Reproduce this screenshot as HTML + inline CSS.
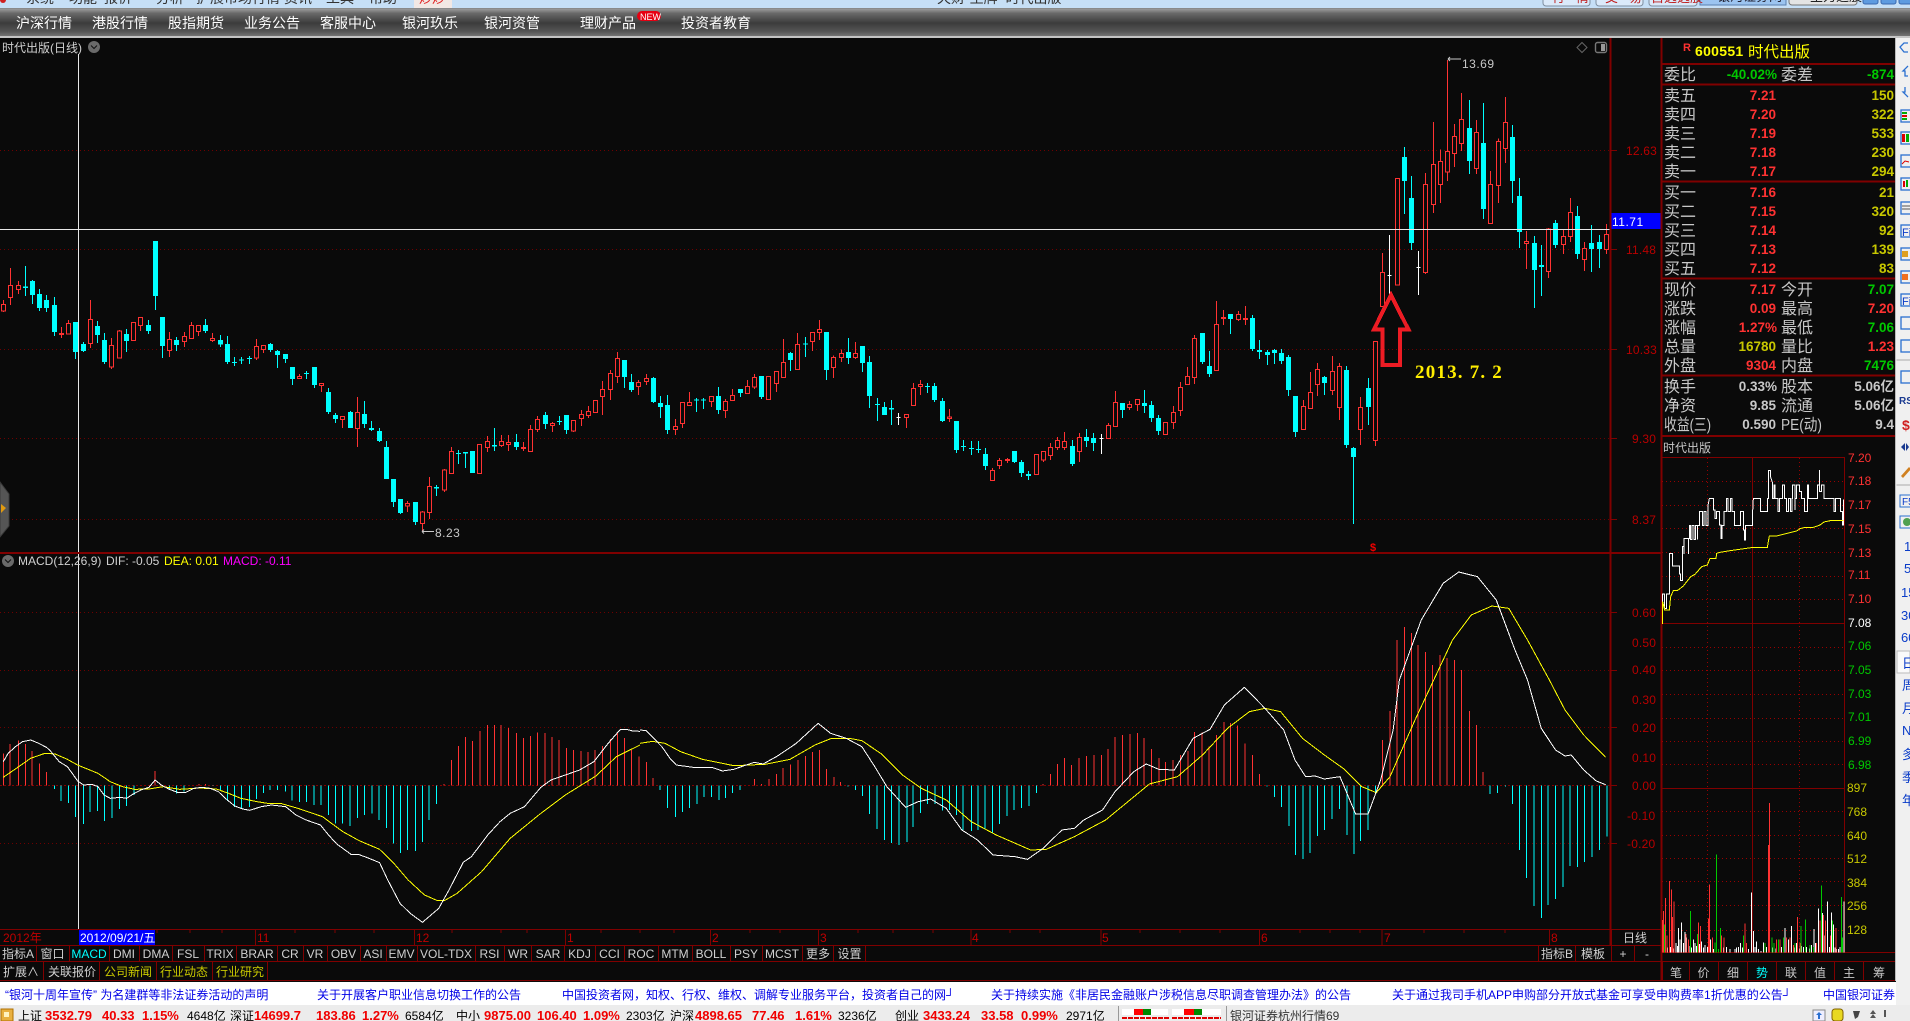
<!DOCTYPE html>
<html><head><meta charset="utf-8"><title>时代出版</title>
<style>
html,body{margin:0;padding:0;background:#0a0a0a;width:1910px;height:1021px;overflow:hidden}
svg{display:block;position:absolute;left:0;top:0}
text{font-family:"Liberation Sans","WenQuanYi Zen Hei","Noto Sans CJK SC",sans-serif;white-space:pre}
.rw{stroke:#ff3232;stroke-width:3;fill:none}
.rb{stroke:#ff3232;stroke-width:3;fill:#0a0a0a}
.cw{stroke:#0ff;stroke-width:3;fill:none}
.cb{stroke:#0ff;stroke-width:15;fill:none}
.ww{stroke:#fff;stroke-width:3;fill:none}
.ln{stroke:#800000;stroke-width:1;fill:none}
.ln2{stroke:#800000;stroke-width:2;fill:none}
.dot{stroke:#6e0000;stroke-width:1;stroke-dasharray:1 3;fill:none}
.ns{vector-effect:non-scaling-stroke}
.ax{font-size:12px;fill:#b80000;letter-spacing:.2px}
.nav{font-size:14px;fill:#fff}
.top{font-size:14px;fill:#333}
.tb{font-size:12px;fill:#d0d0d0}
.lb{font-size:16px;fill:#c8c8c8}
.n{font-size:13.5px;font-weight:bold;text-anchor:end}
.r{fill:#ff3232}.g{fill:#00c800}.y{fill:#c8c800}.w{fill:#c8c8c8}
.mr{font-size:12px;fill:#ff3232}.mg{font-size:12px;fill:#00c800}.mv{font-size:12px;fill:#c8c800}
.mq{font-size:12px;fill:#0000e6}
.st{font-size:12px;fill:#000}
.sr{font-size:13px;fill:#f00000;font-weight:bold}
.tbr{font-size:13px;fill:#0a3cc8}
</style></head><body>
<svg width="1910" height="1021" viewBox="0 0 1910 1021" xmlns="http://www.w3.org/2000/svg">
<defs><linearGradient id="nv" x1="0" y1="0" x2="0" y2="1"><stop offset="0" stop-color="#9a9a9a"/><stop offset=".15" stop-color="#6a6a6a"/><stop offset=".5" stop-color="#3c3c3c"/><stop offset=".8" stop-color="#555"/><stop offset="1" stop-color="#7a7a7a"/></linearGradient></defs>
<rect width="1910" height="1021" fill="#0a0a0a"/>

<!-- top menu strip -->
<rect width="1910" height="9" fill="#c6dff6"/>
<rect x="414" y="0" width="38" height="8" fill="#f2e8e4"/>
<circle cx="3" cy="0" r="3" fill="#d02020"/>
<g class="top"><text class="top" x="26" y="3">系统</text><text class="top" x="69" y="3">功能</text><text class="top" x="104" y="3">报价</text><text class="top" x="156" y="3">分析</text><text class="top" x="196" y="3">扩展市场行情</text><text class="top" x="284" y="3">资讯</text><text class="top" x="326" y="3">工具</text><text class="top" x="369" y="3">帮助</text><text x="419" y="3" style="font-size:13px;fill:#e02020">炒炒</text><text class="top" x="937" y="3">天财·王牌  时代出版</text></g>
<g fill="#dbeafa" stroke="#7f8fa0"><rect x="1543" y="-6" width="47" height="12" rx="3"/><rect x="1596" y="-6" width="47" height="12" rx="3"/><rect x="1649" y="-6" width="48" height="12" rx="3"/></g>
<rect x="1700" y="-4" width="86" height="9" fill="#9cc4f0" stroke="#5a7fb0"/>
<rect x="1789" y="-4" width="68" height="9" fill="#e4e4e4" stroke="#777" rx="3"/>
<g fill="#5e9be0" stroke="#3a6ab0"><rect x="1863" y="-4" width="15" height="8" rx="2"/><rect x="1881" y="-4" width="15" height="8" rx="2"/><rect x="1899" y="-4" width="15" height="8" rx="2"/></g>
<text x="1552" y="2" style="font-size:13px;fill:#c02020">行   情</text><text x="1605" y="2" style="font-size:13px;fill:#c02020">交   易</text><text x="1651" y="2" style="font-size:13px;fill:#c02020">自选选股</text><text x="1717" y="1" style="font-size:13px;fill:#223">银河证券网</text><text x="1810" y="1" style="font-size:13px;fill:#222">主力选股</text>

<!-- nav -->
<rect x="0" y="9" width="1910" height="28" fill="url(#nv)"/>
<rect x="0" y="8" width="1910" height="1" fill="#8a8a8a"/><rect x="0" y="36" width="1910" height="2" fill="#c4c4c4"/>
<g class="nav"><text class="nav" x="16" y="28">沪深行情</text><text class="nav" x="92" y="28">港股行情</text><text class="nav" x="168" y="28">股指期货</text><text class="nav" x="244" y="28">业务公告</text><text class="nav" x="320" y="28">客服中心</text><text class="nav" x="402" y="28">银河玖乐</text><text class="nav" x="484" y="28">银河资管</text><text class="nav" x="580" y="28">理财产品</text><text class="nav" x="681" y="28">投资者教育</text></g>
<rect x="637" y="11" width="24" height="10" rx="5" fill="#e60012"/><text x="640" y="20" style="font-size:9px;fill:#fff">NEW</text>

<!-- titles -->
<text x="2" y="52" style="font-size:12px;fill:#d0d0d0">时代出版(日线)</text>
<circle cx="94" cy="47" r="6" fill="#6a6a6a"/><path d="M91 45.5l3 3 3-3" stroke="#111" fill="none"/>
<path d="M1582 42.5l5 5-5 5-5-5z" stroke="#666" fill="none"/>
<rect x="1595.5" y="42.5" width="11" height="10" rx="2" stroke="#777" fill="none" stroke-width="1.4"/><rect x="1601" y="44" width="4" height="7" fill="#999"/>

<!-- main dotted -->
<path class="dot" d="M0 150.5H1610M0 249.5H1610M0 349.5H1610M0 438.5H1610M0 519.5H1610"/>
<path class="ln" d="M1611 150.5h6M1611 249.5h6M1611 349.5h6M1611 438.5h6M1611 519.5h6"/>

<!-- candles A -->
<g transform="translate(0 230) scale(.33333)" shape-rendering="crispEdges">
<path class="rw" d="M10 210V246M31 114V225M55 153V192M184 291V324M205 270V312M271 210V354M334 324V417M358 300V384M400 276V333M421 262V303M508 306V381M553 306V351M574 276V327M595 285V318M637 309V336M769 327V390M790 345V369M898 432V446M964 459V486M1027 559V594M1072 501V651M1222 813V846M1267 843V903M1288 741V867M1333 717V786M1354 651V731M1438 642V732"/>
<path class="rb" d="M4 223h12V243h-12zM25 166h12V203h-12zM49 166h12V179h-12zM178 310h12V314h-12zM199 280h12V312h-12zM265 268h12V341h-12zM328 346h12V411h-12zM352 303h12V384h-12zM394 277h12V332h-12zM415 262h12V287h-12zM502 328h12V362h-12zM547 319h12V334h-12zM568 286h12V326h-12zM589 286h12V304h-12zM631 325h12V332h-12zM763 349h12V384h-12zM784 346h12V359h-12zM892 439h12V446h-12zM958 460h12V467h-12zM1021 559h12V569h-12zM1066 547h12V596h-12zM1216 820h12V828h-12zM1261 846h12V880h-12zM1282 769h12V848h-12zM1327 720h12V780h-12zM1348 664h12V730h-12zM1432 643h12V731h-12z"/>
<path class="cw" d="M76 108V198M97 150V222M118 177V243M139 195V246M163 201V318M226 276V387M250 336V366M292 273V339M313 309V402M379 297V366M445 270V312M466 33V240M487 261V384M529 321V363M616 267V309M661 315V351M682 318V402M703 381V408M724 381V402M748 378V402M811 339V366M832 360V414M856 372V399M877 411V465M919 423V447M943 411V474M985 474V552M1006 549V579M1051 543V594M1093 513V594M1114 573V603M1138 594V636M1159 633V747M1180 747V831M1201 807V852M1246 816V885M1309 765V798M1375 660V702M1396 666V714M1417 663V729"/>
<path class="cb" d="M76 169V174M97 153V195M118 192V234M139 210V234M163 225V306M226 276V366M250 342V363M292 288V315M313 330V396M379 312V333M445 285V303M466 33V198M487 261V348M529 330V345M616 285V303M661 330V343M682 342V396M703 396V399M724 388V392M748 384V387M811 342V360M832 363V375M856 372V387M877 411V447M919 429V432M943 411V465M985 486V546M1006 555V567M1051 546V594M1093 552V582M1114 594V600M1138 603V633M1159 651V747M1180 747V816M1201 807V849M1246 816V876M1309 771V776M1375 669V672M1396 666V670M1417 663V729"/>
</g>
<!-- candles B -->
<g transform="translate(480 300) scale(.33333)" shape-rendering="crispEdges">
<path class="rw" d="M22 408V456M64 405V441M85 405V453M130 426V453M151 375V456M172 348V396M217 366V396M280 360V396M304 330V378M325 318V354M346 300V339M367 243V345M391 210V300M412 156V249M475 240V285M499 222V255M586 357V405M607 307V384M628 276V318M694 289V321M736 297V354M757 267V303M802 240V282M823 222V267M865 229V300M889 214V276M910 117V234M952 99V210M997 97V153M1018 60V120M1060 166V234M1084 148V186M1126 126V177M1279 343V384M1300 249V318M1321 240V285M1408 327V366"/>
<path class="rb" d="M16 424h12V443h-12zM58 424h12V437h-12zM79 427h12V433h-12zM124 442h12V445h-12zM145 388h12V455h-12zM166 358h12V389h-12zM211 370h12V376h-12zM274 361h12V393h-12zM298 343h12V356h-12zM319 334h12V347h-12zM340 301h12V338h-12zM361 268h12V290h-12zM385 220h12V269h-12zM406 175h12V230h-12zM469 247h12V260h-12zM493 235h12V245h-12zM580 379h12V389h-12zM601 307h12V371h-12zM622 307h12V317h-12zM688 289h12V305h-12zM730 304h12V332h-12zM751 286h12V302h-12zM796 259h12V281h-12zM817 232h12V261h-12zM859 229h12V299h-12zM883 214h12V250h-12zM904 187h12V233h-12zM946 133h12V209h-12zM991 97h12V125h-12zM1012 88h12V98h-12zM1054 172h12V203h-12zM1078 160h12V173h-12zM1120 160h12V173h-12zM1273 343h12V353h-12zM1294 265h12V317h-12zM1315 253h12V260h-12zM1402 351h12V356h-12z"/>
<path class="cw" d="M43 384V453M109 402V450M196 336V387M238 348V375M259 345V402M433 180V264M454 222V276M520 231V309M541 288V354M562 285V402M649 294V336M670 294V327M715 261V342M781 267V291M844 228V297M931 156V213M976 111V171M1039 96V240M1105 114V192M1147 138V216M1168 168V324M1192 294V363M1213 306V345M1234 300V375M1342 249V279M1363 249V306M1387 294V366M1429 363V459"/>
<path class="cb" d="M43 435V440M109 426V441M196 345V372M238 363V366M259 345V390M433 180V231M454 246V270M520 234V306M541 309V321M562 315V390M649 299V302M670 299V302M715 288V330M781 267V279M844 228V291M931 159V180M976 131V134M1039 96V210M1105 156V174M1147 138V189M1168 186V288M1192 312V315M1213 321V345M1234 324V329M1342 258V261M1363 258V300M1387 303V363M1429 363V450"/>
<path class="ww" d="M1255 339V375M1249 352.500h12"/>
</g>
<!-- candles C -->
<g transform="translate(960 290) scale(.33333)" shape-rendering="crispEdges">
<path class="rw" d="M97 534V572M118 504V537M142 504V519M229 492V555M250 483V516M271 459V510M292 441V480M313 426V480M358 429V516M445 399V447M466 303V411M508 333V360M532 328V363M616 397V435M640 348V417M661 276V378M682 231V285M703 135V282M769 33V243M790 60V105M835 63V93M856 48V105M1030 330V420M1051 246V357M1072 219V318M1117 198V315M1138 219V390M1201 321V465M1246 153V468"/>
<path class="rb" d="M91 541h12V572h-12zM112 511h12V527h-12zM136 508h12V512h-12zM223 493h12V554h-12zM244 484h12V510h-12zM265 472h12V497h-12zM286 451h12V473h-12zM307 454h12V473h-12zM352 442h12V485h-12zM439 406h12V446h-12zM460 337h12V410h-12zM502 343h12V353h-12zM526 328h12V344h-12zM610 397h12V434h-12zM634 367h12V398h-12zM655 292h12V362h-12zM676 259h12V284h-12zM697 145h12V262h-12zM763 103h12V242h-12zM784 82h12V86h-12zM829 73h12V89h-12zM850 85h12V89h-12zM1024 349h12V419h-12zM1045 307h12V356h-12zM1066 238h12V284h-12zM1111 244h12V302h-12zM1132 229h12V353h-12zM1195 352h12V419h-12zM1240 154h12V452h-12z"/>
<path class="cw" d="M10 450V483M34 453V495M55 453V489M76 474V540M163 483V519M184 510V561M205 543V570M337 450V528M379 417V471M400 429V483M487 339V384M553 300V369M574 333V396M595 375V435M727 129V222M748 183V261M811 72V132M877 75V183M898 150V207M922 180V225M943 177V222M964 177V222M985 195V318M1006 318V441M1093 258V315M1159 228V474M1180 471V702M1225 264V405"/>
<path class="cb" d="M10 468V471M34 474V477M55 477V480M76 492V528M163 483V516M184 516V549M205 552V558M337 468V522M379 441V453M400 444V459M487 339V360M553 339V348M574 345V384M595 384V423M727 129V216M748 228V252M811 72V87M877 84V177M898 180V186M922 186V195M943 180V189M964 189V213M985 201V300M1006 318V426M1093 261V279M1159 240V465M1180 474V501M1225 294V351"/>
<path class="ww" d="M424 432V492M418 445.500h12"/>
</g>
<!-- candles D -->
<g transform="translate(1300 40) scale(.33333)" shape-rendering="crispEdges">
<path class="rw" d="M247 639V800M292 415V735M376 399V702M400 246V519M421 328V489M442 60V423M463 252V381M484 159V333M529 240V402M571 393V552M595 295V489M616 171V369M679 573V687M745 564V714M790 570V642M811 474V606M853 606V693M919 552V642"/>
<path class="rb" d="M241 697h12V800h-12zM286 415h12V735h-12zM370 433h12V698h-12zM394 373h12V494h-12zM415 364h12V434h-12zM436 334h12V396h-12zM457 289h12V341h-12zM478 238h12V311h-12zM523 277h12V386h-12zM565 433h12V551h-12zM589 304h12V437h-12zM610 247h12V326h-12zM673 604h12V610h-12zM739 567h12V695h-12zM784 589h12V613h-12zM805 517h12V590h-12zM847 625h12V659h-12zM913 583h12V628h-12z"/>
<path class="cw" d="M313 321V522M334 408V630M508 180V402M550 189V537M637 255V489M658 414V624M703 588V804M724 615V768M766 540V624M832 498V657M874 555V696M898 585V684"/>
<path class="cb" d="M313 351V423M334 474V609M508 264V363M550 309V507M637 291V423M658 468V576M703 609V690M724 675V681M766 549V615M832 528V642M874 609V627M898 606V627"/>
<path class="ww" d="M268 585V765M262 706.500h12M355 633V765M349 682.500h12"/>
<path d="M273 765L222 868H248V975H300V868H325Z" fill="none" stroke="#ed1c24" stroke-width="12" stroke-linejoin="miter"/>
</g>
<text x="1415" y="378" style="font-family:'Liberation Serif',serif;font-size:19px;font-weight:bold;fill:#ffee00;letter-spacing:1.2px">2013. 7. 2</text>
<!-- high low marks -->
<path d="M1448 59l2-2M1448 59l2 2M1448 59h13" stroke="#c8c8c8" fill="none"/>
<text x="1462" y="68" style="font-size:12px;fill:#c8c8c8;letter-spacing:.5px">13.69</text>
<path d="M422 531.500l2-2M422 531.500l2 2M422 531.500h12" stroke="#c8c8c8" fill="none"/>
<text x="435" y="537" style="font-size:12px;fill:#c8c8c8;letter-spacing:.5px">8.23</text>
<text x="1370" y="551" style="font-size:11px;font-weight:bold;fill:#f00000">$</text>

<!-- crosshair -->
<rect x="0" y="229" width="1610" height="1" fill="#e8e8e8"/>
<rect x="78" y="54" width="1" height="875" fill="#e8e8e8"/>

<!-- left handle -->
<path d="M0 482L9 494V526L0 537Z" fill="#555" stroke="#3a3a3a"/><path d="M1 504L6 508L1 513Z" fill="#e09a10"/>

<!-- axis -->
<text class="ax" x="1626" y="155">12.63</text><text class="ax" x="1626" y="254">11.48</text><text class="ax" x="1626" y="354">10.33</text><text class="ax" x="1632" y="443">9.30</text><text class="ax" x="1632" y="524">8.37</text>
<rect x="1611" y="213" width="50" height="16" fill="#0000ff"/><text x="1612" y="226" style="font-size:12px;fill:#fff;letter-spacing:.5px">11.71</text>

<!-- MACD -->
<path class="ln2" d="M0 553H1662"/>
<circle cx="8" cy="561" r="6" fill="#6a6a6a"/><path d="M5 559.500l3 3 3-3" stroke="#111" fill="none"/>
<text x="18" y="565" style="font-size:12px;fill:#d0d0d0">MACD(12,26,9)</text><text x="106" y="565" style="font-size:12px;fill:#d0d0d0">DIF: -0.05</text><text x="164" y="565" style="font-size:12px;fill:#ffff00">DEA: 0.01</text><text x="223" y="565" style="font-size:12px;fill:#ff00ff">MACD: -0.11</text>
<path class="dot" d="M0 612.500H1610M0 670.500H1610M0 727.500H1610M0 843.500H1610"/>
<path class="ln" d="M0 785.500H1610" stroke-dasharray="2 2"/>
<path class="ln" d="M1611 612.500h6M1611 670.500h6M1611 727.500h6M1611 785.500h6M1611 843.500h6"/>
<g class="ax"><text class="ax" x="1632" y="617">0.60</text><text class="ax" x="1632" y="647">0.50</text><text class="ax" x="1632" y="674">0.40</text><text class="ax" x="1632" y="704">0.30</text><text class="ax" x="1632" y="732">0.20</text><text class="ax" x="1632" y="762">0.10</text><text class="ax" x="1632" y="790">0.00</text><text class="ax" x="1627" y="820">-0.10</text><text class="ax" x="1627" y="848">-0.20</text></g>

<g transform="translate(0 700) scale(.40816 .33333)" shape-rendering="crispEdges">
<path class="ns" stroke="#ff3232" fill="none" d="M8 256V160M25 256V132M45 256V122M62 256V132M79 256V153M97 256V190M114 256V216M380 256V213M487 256V252M503 256V252M1088 256V252M1106 256V180M1123 256V138M1140 256V111M1158 256V123M1176 256V93M1194 256V75M1211 256V75M1228 256V75M1246 256V84M1265 256V99M1282 256V114M1300 256V108M1317 256V97M1335 256V99M1353 256V111M1370 256V120M1388 256V144M1405 256V150M1423 256V153M1440 256V156M1458 256V150M1476 256V138M1496 256V117M1513 256V96M1530 256V114M1547 256V150M1565 256V170"/>
<path class="ns" stroke="#0ff" fill="none" d="M133 256V267M150 256V303M168 256V309M185 256V351M204 256V372M221 256V336M239 256V333M256 256V363M274 256V354M293 256V327M310 256V318M328 256V285M415 256V268M433 256V280M451 256V275M522 256V258M540 256V270M557 256V303M574 256V321M592 256V324M611 256V321M628 256V297M645 256V279M662 256V270M680 256V270M699 256V274M716 256V301M734 256V306M751 256V306M769 256V315M787 256V315M805 256V345M822 256V370M839 256V370M858 256V378M876 256V354M893 256V345M911 256V340M929 256V360M947 256V384M964 256V430M981 256V459M998 256V450M1018 256V453M1035 256V426M1051 256V360M1069 256V312"/>
<polyline class="ns" fill="none" stroke="#ffff00" points="8,232 40,205 75,175 110,160 135,162 165,178 190,195 240,220 270,245 300,260 330,268 365,267 400,260 440,268 490,264 530,267 560,280 590,295 630,305 660,311 690,311 730,325 790,350 840,395 880,422 930,448 965,490 1000,540 1040,585 1070,601 1090,601 1120,580 1180,515 1250,415 1320,345 1385,285 1460,228 1510,170 1568,135"/>
<polyline class="ns" fill="none" stroke="#fff" points="8,185 20,160 38,140 55,125 75,120 95,130 115,143 125,155 145,185 165,200 180,225 190,243 205,255 225,253 240,260 255,285 270,295 295,292 310,295 325,283 345,270 365,262 380,240 395,255 415,268 435,277 455,277 475,265 495,262 515,265 535,275 555,298 575,318 595,327 612,331 640,320 665,315 700,320 725,345 750,360 785,375 805,405 825,432 860,463 880,464 900,473 930,488 950,540 980,610 1005,640 1035,667 1075,625 1100,570 1135,487 1155,470 1195,405 1225,365 1250,340 1285,320 1325,262 1350,240 1385,225 1420,210 1455,185 1490,130 1520,88 1535,88 1550,93 1568,94"/>
</g>
<g transform="translate(640 680) scale(.625 .33333)" shape-rendering="crispEdges">
<path class="ns" stroke="#ff3232" fill="none" d="M10 316V246M21 316V294M183 316V297M194 316V312M206 316V297M218 316V282M229 316V264M241 316V254M253 316V240M265 316V228M276 316V216M287 316V210M298 316V267M310 316V291M321 316V306M645 316V312M657 316V282M668 316V252M679 316V234M690 316V255M702 316V234M714 316V228M726 316V225M738 316V225M749 316V207M760 316V171M772 316V165M784 316V162M796 316V159M806 316V174M818 316V207M830 316V234M841 316V246M853 316V240M865 316V225M877 316V213M887 316V156M899 316V158M910 316V200M922 316V165M934 316V126M945 316V129M956 316V136M968 316V190M980 316V225M991 316V282M1188 316V180M1200 316V93M1211 316V-120M1223 316V-159M1234 316V-141M1245 316V-105M1257 316V-84M1268 316V-45M1280 316V-75M1291 316V-66M1303 316V-60M1314 316V-30M1327 316V93M1338 316V135M1349 316V276"/>
<path class="ns" stroke="#0ff" fill="none" d="M32 316V330M44 316V384M57 316V411M68 316V396M79 316V384M91 316V372M102 316V351M114 316V351M126 316V360M137 316V354M148 316V339M160 316V330M333 316V319M345 316V330M356 316V348M367 316V402M379 316V447M391 316V480M402 316V489M414 316V495M427 316V486M437 316V441M449 316V399M460 316V372M472 316V372M484 316V391M495 316V390M506 316V405M517 316V450M530 316V453M541 316V450M552 316V448M564 316V459M575 316V432M587 316V408M598 316V390M610 316V384M622 316V378M634 316V339M1003 316V319M1015 316V351M1026 316V381M1038 316V438M1049 316V525M1061 316V537M1072 316V519M1084 316V468M1095 316V450M1107 316V417M1119 316V387M1131 316V465M1142 316V522M1153 316V483M1165 316V450M1177 316V340M1360 316V342M1372 316V339M1385 316V319M1396 316V372M1407 316V510M1418 316V594M1430 316V678M1442 316V714M1453 316V675M1465 316V657M1477 316V621M1488 316V558M1500 316V561M1511 316V546M1523 316V531M1535 316V510M1547 316V470"/>
<polyline class="ns" fill="none" stroke="#ffff00" points="0,190 20,184 40,190 65,215 100,238 150,257 200,253 240,238 280,195 305,176 335,175 355,182 385,220 420,285 450,325 490,360 530,425 570,465 625,510 650,508 695,470 745,420 815,312 860,290 900,225 940,145 975,95 1000,85 1025,95 1060,175 1095,225 1125,265 1155,320 1178,338 1200,290 1240,120 1270,0 1300,-120 1330,-195 1363,-222 1390,-215 1420,-120 1455,0 1480,90 1510,165 1545,232"/>
<polyline class="ns" fill="none" stroke="#fff" points="0,150 10,152 22,175 35,200 48,235 58,255 85,262 115,262 132,273 150,268 170,255 183,247 197,252 220,228 250,190 285,130 305,160 330,175 355,200 375,258 395,320 425,382 445,365 465,357 490,385 515,450 540,480 565,525 600,530 620,538 645,505 675,450 695,445 710,420 740,390 760,335 790,275 810,252 830,268 855,270 885,175 912,148 935,75 967,22 1000,85 1030,150 1048,240 1065,290 1080,288 1095,297 1120,290 1145,402 1165,402 1185,300 1205,150 1215,0 1250,-180 1285,-290 1310,-324 1340,-310 1370,-240 1400,-90 1420,0 1442,145 1465,210 1480,228 1490,225 1510,270 1530,303 1545,314"/>
</g>

<!-- time axis -->
<path class="ln" d="M0 929.500H1662M0 945.500H1662M0 961.500H1896M0 980.500H1896"/>
<path class="ln" d="M255.500 930V945M414.500 930V945M565.500 930V945M710.500 930V945M818.500 930V945M971 930V945M1101 930V945M1259.500 930V945M1382 930V945M1549.500 930V945M157 930v3M190 930v3M222 930v3M295 930v3M335 930v3M374 930v3M452 930v3M501 930v3M527 930v3M601 930v3M640 930v3M674 930v3M750 930v3M780 930v3M858 930v3M893 930v3M933 930v3M1010 930v3M1040 930v3M1140 930v3M1180 930v3M1220 930v3M1300 930v3M1330 930v3M1360 930v3M1424 930v3M1464 930v3M1505 930v3"/>
<rect x="79" y="930" width="76" height="15" fill="#0000ff"/><text x="80" y="942" style="font-size:12px;fill:#fff">2012/09/21/五</text>
<text x="3" y="942" style="font-size:12px;fill:#c00000">2012年</text>
<g style="font-size:12px;fill:#c00000"><text x="257" y="942">11</text><text x="416" y="942">12</text><text x="567" y="942">1</text><text x="712" y="942">2</text><text x="820" y="942">3</text><text x="972" y="942">4</text><text x="1102" y="942">5</text><text x="1261" y="942">6</text><text x="1384" y="942">7</text><text x="1551" y="942">8</text></g>

<!-- indicator tabs -->
<path class="ln" d="M36.500 946V961M69.500 946V961M109.500 946V961M139.500 946V961M172.500 946V961M204.500 946V961M236.500 946V961M277.500 946V961M303.500 946V961M327.500 946V961M360.500 946V961M386.500 946V961M417.500 946V961M475.500 946V961M504.500 946V961M531.500 946V961M564.500 946V961M595.500 946V961M624.500 946V961M658.500 946V961M692.500 946V961M730.500 946V961M762.500 946V961M802.500 946V961M833.500 946V961M865.500 946V961M1538.500 946V961M1575.500 946V961M1611.500 930V961M1634.500 946V961"/>
<g class="tb" text-anchor="middle"><text class="tb" x="18" y="958">指标A</text><text class="tb" x="52.500" y="958">窗口</text><text x="89" y="958" style="font-size:12px;fill:#0ff">MACD</text><text class="tb" x="124" y="958">DMI</text><text class="tb" x="156" y="958">DMA</text><text class="tb" x="188" y="958">FSL</text><text class="tb" x="220" y="958">TRIX</text><text class="tb" x="257" y="958">BRAR</text><text class="tb" x="290" y="958">CR</text><text class="tb" x="315" y="958">VR</text><text class="tb" x="343.500" y="958">OBV</text><text class="tb" x="373" y="958">ASI</text><text class="tb" x="401.500" y="958">EMV</text><text class="tb" x="446" y="958">VOL-TDX</text><text class="tb" x="489.500" y="958">RSI</text><text class="tb" x="518" y="958">WR</text><text class="tb" x="548" y="958">SAR</text><text class="tb" x="579.500" y="958">KDJ</text><text class="tb" x="609.500" y="958">CCI</text><text class="tb" x="641" y="958">ROC</text><text class="tb" x="675" y="958">MTM</text><text class="tb" x="711" y="958">BOLL</text><text class="tb" x="746" y="958">PSY</text><text class="tb" x="782" y="958">MCST</text><text class="tb" x="818" y="958">更多</text><text class="tb" x="849.500" y="958">设置</text>
<text class="tb" x="1557" y="958">指标B</text><text class="tb" x="1593" y="958">模板</text><text class="tb" x="1623" y="958">+</text><text class="tb" x="1647" y="958">-</text></g>
<text x="1623" y="942" style="font-size:12px;fill:#d0d0d0">日线</text>
<path class="ln" d="M43.500 962V980M99.500 962V980M156.500 962V980M212.500 962V980M267.500 962V980"/>
<text class="tb" x="3" y="976">扩展∧</text><text class="tb" x="48" y="976">关联报价</text>
<g style="font-size:12px;fill:#c8c800"><text x="104" y="976">公司新闻</text><text x="160" y="976">行业动态</text><text x="216" y="976">行业研究</text></g>
<g class="lb" text-anchor="middle"><text class="lb" style="font-size:12px" x="1676" y="977">笔</text><text class="lb" style="font-size:12px" x="1703.500" y="977">价</text><text class="lb" style="font-size:12px" x="1733" y="977">细</text><text style="font-size:12px;fill:#0ff" x="1762" y="977">势</text><text class="lb" style="font-size:12px" x="1791" y="977">联</text><text class="lb" style="font-size:12px" x="1820" y="977">值</text><text class="lb" style="font-size:12px" x="1849" y="977">主</text><text class="lb" style="font-size:12px" x="1879" y="977">筹</text></g>
<path class="ln" d="M1662.500 962V981M1689.500 962V981M1718.500 962V981M1747.500 962V981M1776.500 962V981M1805.500 962V981M1834.500 962V981M1863.500 962V981"/>

<!-- right panel frame -->
<path class="ln2" d="M1610.500 38V946M1661.500 38V981"/>
<path class="ln2" d="M1662 64H1896M1662 84.500H1896M1662 181.500H1896M1662 278.500H1896M1662 375.500H1896M1662 436H1896"/>

<text x="1683" y="51" style="font-size:11px;font-weight:bold;fill:#ff3232">R</text>
<text x="1695" y="56" style="font-size:14px;font-weight:bold;fill:#ff0;letter-spacing:.3px">600551</text>
<text x="1748" y="57" style="font-size:15.500px;fill:#ff0">时代出版</text>

<text class="lb" x="1664" y="80">委比</text><text class="lb" x="1781" y="80">委差</text><text class="n g" x="1777" y="79">-40.02%</text><text class="n g" x="1894" y="79">-874</text>
<g class="lb"><text class="lb" x="1664" y="101">卖五</text><text class="lb" x="1664" y="120">卖四</text><text class="lb" x="1664" y="139">卖三</text><text class="lb" x="1664" y="158">卖二</text><text class="lb" x="1664" y="177">卖一</text><text class="lb" x="1664" y="198">买一</text><text class="lb" x="1664" y="217">买二</text><text class="lb" x="1664" y="236">买三</text><text class="lb" x="1664" y="255">买四</text><text class="lb" x="1664" y="274">买五</text><text class="lb" x="1664" y="295">现价</text><text class="lb" x="1664" y="314">涨跌</text><text class="lb" x="1664" y="333">涨幅</text><text class="lb" x="1664" y="352">总量</text><text class="lb" x="1664" y="371">外盘</text><text class="lb" x="1664" y="392">换手</text><text class="lb" x="1664" y="411">净资</text><text class="lb" x="1664" y="430" textLength="47" lengthAdjust="spacingAndGlyphs">收益(三)</text>
<text class="lb" x="1781" y="295">今开</text><text class="lb" x="1781" y="314">最高</text><text class="lb" x="1781" y="333">最低</text><text class="lb" x="1781" y="352">量比</text><text class="lb" x="1781" y="371">内盘</text><text class="lb" x="1781" y="392">股本</text><text class="lb" x="1781" y="411">流通</text><text class="lb" x="1781" y="430" textLength="41" lengthAdjust="spacingAndGlyphs">PE(动)</text></g>
<text class="n r" x="1776" y="100">7.21</text><text class="n r" x="1776" y="119">7.20</text><text class="n r" x="1776" y="138">7.19</text><text class="n r" x="1776" y="157">7.18</text><text class="n r" x="1776" y="176">7.17</text><text class="n r" x="1776" y="197">7.16</text><text class="n r" x="1776" y="216">7.15</text><text class="n r" x="1776" y="235">7.14</text><text class="n r" x="1776" y="254">7.13</text><text class="n r" x="1776" y="273">7.12</text>
<text class="n y" x="1894" y="100">150</text><text class="n y" x="1894" y="119">322</text><text class="n y" x="1894" y="138">533</text><text class="n y" x="1894" y="157">230</text><text class="n y" x="1894" y="176">294</text><text class="n y" x="1894" y="197">21</text><text class="n y" x="1894" y="216">320</text><text class="n y" x="1894" y="235">92</text><text class="n y" x="1894" y="254">139</text><text class="n y" x="1894" y="273">83</text>
<text class="n r" x="1776" y="294">7.17</text><text class="n r" x="1776" y="313">0.09</text><text class="n r" x="1777" y="332">1.27%</text><text class="n y" x="1776" y="351">16780</text><text class="n r" x="1776" y="370">9304</text>
<text class="n g" x="1894" y="294">7.07</text><text class="n r" x="1894" y="313">7.20</text><text class="n g" x="1894" y="332">7.06</text><text class="n r" x="1894" y="351">1.23</text><text class="n g" x="1894" y="370">7476</text>
<text class="n w" x="1777" y="391">0.33%</text><text class="n w" x="1776" y="410">9.85</text><text class="n w" x="1776" y="429">0.590</text>
<text class="n w" x="1894" y="391">5.06亿</text><text class="n w" x="1894" y="410">5.06亿</text><text class="n w" x="1894" y="429">9.4</text>

<!-- mini chart -->
<text x="1663" y="452" style="font-size:12px;fill:#c8c8c8">时代出版</text>
<path class="dot" d="M1662 481.500H1844M1662 505.500H1844M1662 528.500H1844M1662 552.500H1844M1662 576.500H1844M1662 599.500H1844M1662 647.500H1844M1662 670.500H1844M1662 694.500H1844M1662 718.500H1844M1662 741.500H1844M1662 764.500H1844M1662 811.500H1844M1662 835.500H1844M1662 858.500H1844M1662 881.500H1844M1662 905.500H1844M1662 930.500H1844M1707.500 458V953M1799.500 458V953" style="stroke:#900"/>
<path class="ln" d="M1662 457.500H1845M1662 623.500H1845M1662 788.500H1845M1662 952.500H1896M1752.500 458V953M1844.500 458V953"/>
<g transform="translate(1620 430) scale(.33333)" shape-rendering="crispEdges">
<path fill="none" stroke="#fff" stroke-width="3" d="M128 575V492H134V535H140V492H148V370H158V408H178V432H182V452H188V350H192V372V325H205V372V325H208V286H212V328H216V286H222V328H226V286H232V328V286H238V268V244H248V286H252V244H258V286H264V226L268 206H281V240H285V265H290V245H298V285H303V325H306V286H312V244H320V206H324V244H332V206H336V244H344V286H362V244H370V300H374V330H377V286H398V244L400 206H422V244H442V205H446V122H452V142L458 160V206H462V165H465V206H474V244H478V206H488V165H494V206H500V244H505V206H512V244H516V206H518V165H525V240V206H530V165H538V185H544V206H553V244H562V165H566V206H592V165H598V120V185H604V165H612V206H642V244H646V206H662V244H668V285H671V208"/>
<path fill="none" stroke="#ffff00" stroke-width="3" d="M128 582V515L134 540H148L152 500L160 482H172L190 468L212 440L225 433L245 410L262 405L270 385H288L290 370L300 367L330 362L400 352H442L448 318H470L530 303L540 296L555 292H580L600 285L612 276L635 271H670"/>
</g>
<g transform="translate(1620 430) scale(.33333 .37736)" shape-rendering="crispEdges">
<path fill="none" stroke="#fff" stroke-width="3" d="M135 1385V1370M152 1385V1370M168 1385V1360M175 1385V1320M185 1385V1305M195 1385V1330M200 1385V1345M220 1385V1350M225 1385V1360M245 1385V1355M255 1385V1365M272 1385V1350M320 1385V1370M345 1385V1375M355 1385V1370M362 1385V1360M394 1385V1225M400 1385V1328M410 1385V1355M423 1385V1380M430 1385V1358M448 1385V1335M495 1385V1320M515 1385V1315M530 1385V1360M550 1385V1370M560 1385V1370M575 1385V1365M582 1385V1322M595 1385V1268M608 1385V1280M622 1385V1250M628 1385V1370M635 1385V1278M640 1385V1310M650 1385V1375M660 1385V1370M672 1385V1250M142 1385V1372M160 1385V1374M172 1385V1368M180 1385V1350M190 1385V1360M210 1385V1368M215 1385V1372M230 1385V1368M238 1385V1362M250 1385V1372M262 1385V1370M280 1385V1376M295 1385V1378M310 1385V1372M330 1385V1376M350 1385V1372M368 1385V1372M385 1385V1376M405 1385V1370M415 1385V1376M440 1385V1370M458 1385V1372M468 1385V1374M485 1385V1370M505 1385V1350M522 1385V1372M538 1385V1374M545 1385V1368M568 1385V1374M586 1385V1360M600 1385V1365M615 1385V1340M645 1385V1372M655 1385V1376"/>
<path fill="none" stroke="#ff3232" stroke-width="3" d="M128 1385V1298M131 1385V1275M137 1385V1240M141 1385V1340M148 1385V1195M155 1385V1218M158 1385V1290M162 1385V1250M198 1385V1335M205 1385V1350M235 1385V1305M241 1385V1315M265 1385V1295M268 1385V1205M278 1385V1345M305 1385V1340M312 1385V1345M375 1385V1308M380 1385V1360M445 1385V1100M448 1385V988M470 1385V1350M480 1385V1350M500 1385V1345M510 1385V1345M520 1385V1365M532 1385V1290M540 1385V1360M590 1385V1360M600 1385V1300M610 1385V1285M616 1385V1300M632 1385V1340M648 1385V1320"/>
<path fill="none" stroke="#00c800" stroke-width="3" d="M133 1385V1310M211 1385V1275M232 1385V1335M285 1385V1358M289 1385V1125M295 1385V1375M302 1385V1320M370 1385V1340M435 1385V1360M456 1385V1345M462 1385V1360M475 1385V1350M490 1385V1345M525 1385V1360M543 1385V1315M556 1385V1297M570 1385V1365M580 1385V1370M604 1385V1207M637 1385V1300M664 1385V1237M668 1385V1345"/>
</g>
<g><text class="mr" x="1848" y="462">7.20</text><text class="mr" x="1848" y="485">7.18</text><text class="mr" x="1848" y="509">7.17</text><text class="mr" x="1848" y="533">7.15</text><text class="mr" x="1848" y="557">7.13</text><text class="mr" x="1848" y="579">7.11</text><text class="mr" x="1848" y="603">7.10</text><text x="1848" y="627" style="font-size:12px;fill:#fff">7.08</text><text class="mg" x="1848" y="650">7.06</text><text class="mg" x="1848" y="674">7.05</text><text class="mg" x="1848" y="698">7.03</text><text class="mg" x="1848" y="721">7.01</text><text class="mg" x="1848" y="745">6.99</text><text class="mg" x="1848" y="769">6.98</text><text class="mv" x="1847" y="792">897</text><text class="mv" x="1847" y="816">768</text><text class="mv" x="1847" y="840">640</text><text class="mv" x="1847" y="863">512</text><text class="mv" x="1847" y="887">384</text><text class="mv" x="1847" y="910">256</text><text class="mv" x="1847" y="934">128</text></g>

<!-- right toolbar -->
<rect x="1896" y="38" width="14" height="983" fill="#f0f0f0"/><rect x="1895" y="38" width="1" height="943" fill="#bbb"/>
<g fill="none" stroke="#2a6fd0" stroke-width="1.300">
<path d="M1908 43H1904L1900 47L1904 52H1908"/><path d="M1908 66L1903 71H1905V76H1908"/><path d="M1905 87V92L1903 92L1908 97"/>
<rect x="1901" y="110" width="12" height="12"/><rect x="1901" y="132" width="12" height="12"/><rect x="1901" y="155" width="12" height="12"/><rect x="1901" y="178" width="12" height="12"/><rect x="1901" y="202" width="12" height="12"/><rect x="1901" y="225" width="12" height="12"/><rect x="1901" y="248" width="12" height="12"/><rect x="1901" y="271" width="12" height="12"/><rect x="1901" y="294" width="12" height="12"/><rect x="1901" y="317" width="12" height="12"/><rect x="1901" y="340" width="12" height="12"/><rect x="1901" y="371" width="12" height="12"/>
</g>
<g><rect x="1902" y="112" width="5" height="2" fill="#0a0"/><rect x="1902" y="115" width="5" height="2" fill="#d00"/><rect x="1902" y="118" width="5" height="2" fill="#0a0"/><rect x="1902" y="134" width="3" height="8" fill="#d00"/><rect x="1906" y="134" width="3" height="8" fill="#0a0"/><path d="M1902 164l3-3 4 1" stroke="#d00" fill="none"/><rect x="1903" y="181" width="2" height="6" fill="#d00"/><rect x="1906" y="180" width="2" height="7" fill="#0a0"/><path d="M1902 206h8M1902 209h8" stroke="#555"/></g>
<path d="M1896.500 360H1910" stroke="#aaa"/>
<text x="1902" y="236" style="font-size:11px;fill:#0a3cc8">Fi</text><text x="1902" y="305" style="font-size:11px;fill:#0a3cc8">Fi</text><rect x="1902" y="251" width="6" height="6" fill="#e0a020"/><rect x="1902" y="274" width="6" height="6" fill="#f07020"/>
<text x="1899" y="404" style="font-size:10px;font-weight:bold;fill:#1a3a90">RS</text>
<text x="1902" y="430" style="font-size:14px;font-weight:bold;fill:#d02020">$</text>
<path d="M1901 447l4-4v8zM1909 447l-3-4v8z" fill="#1a3a90"/>
<path d="M1901 476l8-9 2 2-8 9z" fill="#d08020"/>
<path d="M1896.500 485H1910" stroke="#aaa"/>
<rect x="1900" y="495" width="13" height="12" fill="none" stroke="#2a6fd0"/><text x="1902" y="505" style="font-size:10px;fill:#0a3cc8">F5</text>
<rect x="1900" y="516" width="13" height="12" fill="none" stroke="#2a6fd0"/><circle cx="1907" cy="522" r="4" fill="#50a050"/>
<g><text class="tbr" x="1904" y="551">1</text><text class="tbr" x="1904" y="573">5</text><text class="tbr" x="1901" y="597">15</text><text class="tbr" x="1901" y="620">30</text><text class="tbr" x="1901" y="642">60</text></g>
<rect x="1897" y="651" width="13" height="22" fill="#fafafa" stroke="#bbb"/>
<g><text class="tbr" x="1902" y="668">日</text><text class="tbr" x="1902" y="690">周</text><text class="tbr" x="1902" y="713">月</text><text class="tbr" x="1902" y="735">N</text><text class="tbr" x="1902" y="759">多</text><text class="tbr" x="1902" y="782">季</text><text class="tbr" x="1902" y="805">年</text></g>

<!-- marquee -->
<rect x="0" y="982" width="1896" height="23" fill="#fff"/>
<text class="mq" x="5" y="999">“银河十周年宣传” 为名建群等非法证券活动的声明</text>
<text class="mq" x="317" y="999">关于开展客户职业信息切换工作的公告</text>
<text class="mq" x="562" y="999">中国投资者网，知权、行权、维权、调解专业服务平台，投资者自己的网┘</text>
<text class="mq" x="991" y="999">关于持续实施《非居民金融账户涉税信息尽职调查管理办法》的公告</text>
<text class="mq" x="1392" y="999">关于通过我司手机APP申购部分开放式基金可享受申购费率1折优惠的公告┘</text>
<text class="mq" x="1823" y="999">中国银河证券</text>

<!-- status -->
<rect x="0" y="1005" width="1910" height="16" fill="#ececec"/>
<rect x="1" y="1009" width="12" height="12" fill="#e8b040" stroke="#b07000"/><rect x="4" y="1012" width="5" height="5" fill="#fff3c0"/>
<text class="st" x="18" y="1020">上证</text><text class="sr" x="45" y="1020">3532.79</text><text class="sr" x="102" y="1020">40.33</text><text class="sr" x="142" y="1020">1.15%</text><text class="st" x="187" y="1020">4648亿</text>
<text class="st" x="230" y="1020">深证</text><text class="sr" x="254" y="1020">14699.7</text><text class="sr" x="316" y="1020">183.86</text><text class="sr" x="362" y="1020">1.27%</text><text class="st" x="405" y="1020">6584亿</text>
<text class="st" x="456" y="1020">中小</text><text class="sr" x="484" y="1020">9875.00</text><text class="sr" x="537" y="1020">106.40</text><text class="sr" x="583" y="1020">1.09%</text><text class="st" x="626" y="1020">2303亿</text>
<text class="st" x="670" y="1020">沪深</text><text class="sr" x="695" y="1020">4898.65</text><text class="sr" x="752" y="1020">77.46</text><text class="sr" x="795" y="1020">1.61%</text><text class="st" x="838" y="1020">3236亿</text>
<text class="st" x="895" y="1020">创业</text><text class="sr" x="923" y="1020">3433.24</text><text class="sr" x="981" y="1020">33.58</text><text class="sr" x="1021" y="1020">0.99%</text><text class="st" x="1066" y="1020">2971亿</text>
<path d="M1118.500 1006V1021M1226.500 1006V1021" stroke="#999"/>
<g shape-rendering="crispEdges"><rect x="1122" y="1009" width="12" height="6" fill="#fff"/><rect x="1134" y="1009" width="9" height="6" fill="#f00"/><rect x="1143" y="1009" width="8" height="6" fill="#080"/><rect x="1151" y="1009" width="17" height="6" fill="#fff"/><rect x="1172" y="1009" width="12" height="6" fill="#fff"/><rect x="1184" y="1009" width="10" height="6" fill="#f00"/><rect x="1194" y="1009" width="8" height="6" fill="#080"/><rect x="1202" y="1009" width="19" height="6" fill="#fff"/></g>
<path d="M1122 1018H1169M1172 1018H1221" stroke="#e00000" stroke-width="2" stroke-dasharray="5 1"/>
<text class="st" x="1230" y="1020" style="fill:#333">银河证券杭州行情69</text>
<rect x="1813" y="1010" width="12" height="11" fill="#eef" stroke="#888"/><path d="M1819 1012l3 3h-2v4h-2v-4h-2z" fill="#2a6fd0"/>
<rect x="1832" y="1009" width="11" height="12" rx="3" fill="#e8d820" stroke="#806000"/>
<path d="M1853 1011h7l-2 6-3 2z" fill="#444"/><path d="M1873 1010l3 4h-6zM1873 1014l3 4h-6z" fill="#555"/><path d="M1885 1010v7" stroke="#555" stroke-width="2"/>
</svg>
</body></html>
